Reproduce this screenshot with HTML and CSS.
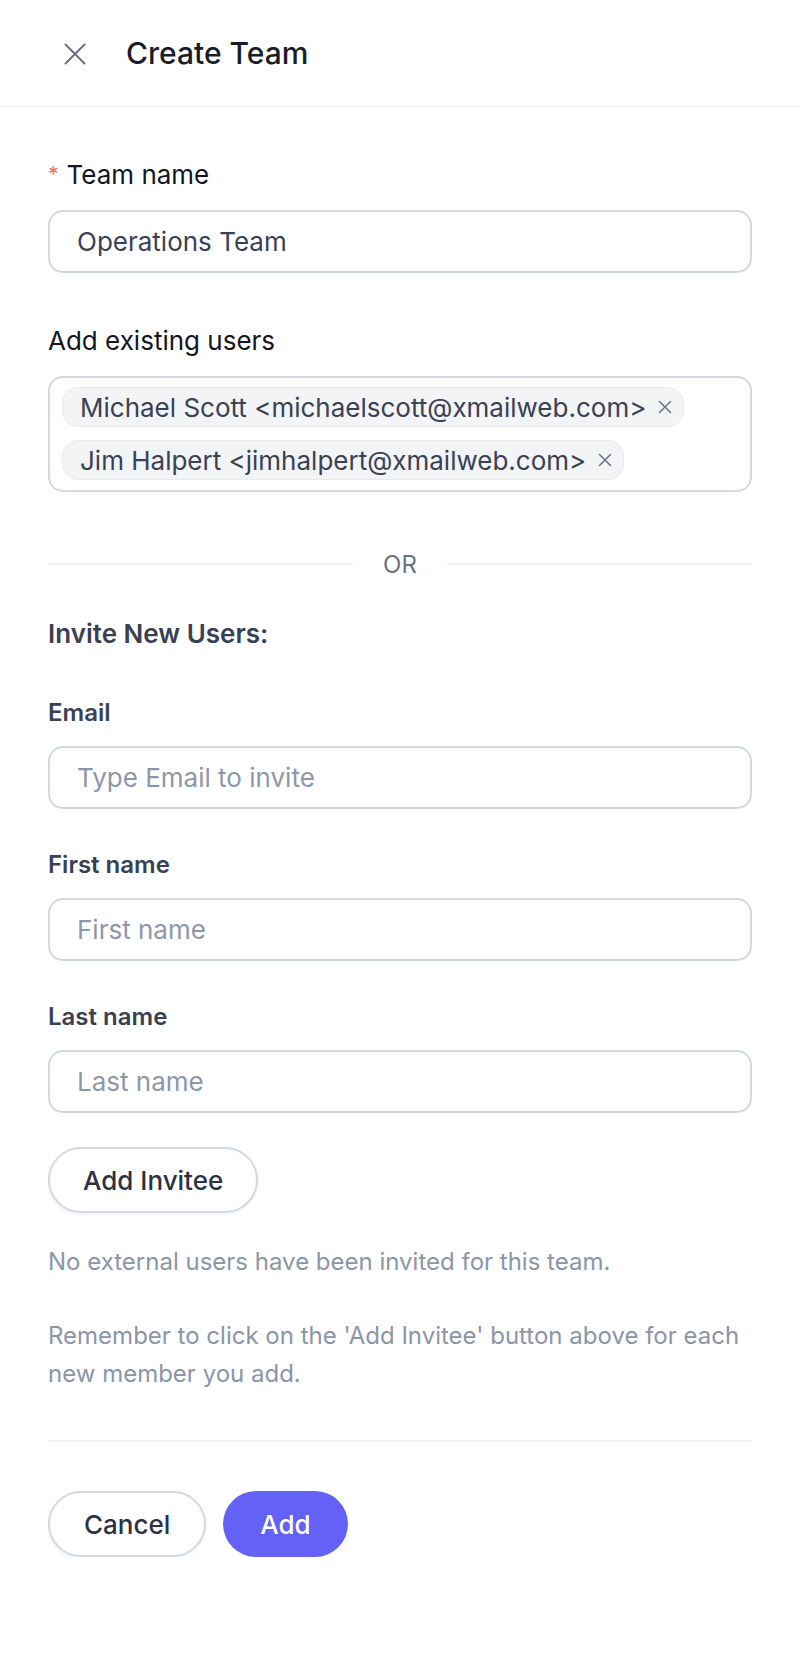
FILE: index.html
```html
<!DOCTYPE html>
<html lang="en">
<head>
<meta charset="utf-8">
<title>Create Team</title>
<link rel="stylesheet" href="styles.css">
</head>
<body>
<div class="panel">
  <header class="header">
    <button class="close" aria-label="Close">
      <svg width="22" height="22" viewBox="0 0 22 22"><path d="M1.5 1.5 L20.5 20.5 M20.5 1.5 L1.5 20.5" stroke="#6b7280" stroke-width="2" stroke-linecap="round" fill="none"/></svg>
    </button>
    <h1 class="title">Create Team</h1>
  </header>

  <form class="form">
    <div class="group">
      <label class="label first-label"><span class="req">*</span>Team name</label>
      <div class="input filled">Operations Team</div>
    </div>

    <div class="group gap-lg">
      <label class="label">Add existing users</label>
      <div class="chips">
        <span class="chip">Michael Scott &lt;michaelscott@xmailweb.com&gt;<svg class="chip-x" width="14" height="14" viewBox="0 0 14 14"><path d="M1.5 1.5 L12.5 12.5 M12.5 1.5 L1.5 12.5" stroke="#6b7280" stroke-width="1.5" stroke-linecap="round" fill="none"/></svg></span>
        <span class="chip">Jim Halpert &lt;jimhalpert@xmailweb.com&gt;<svg class="chip-x" width="14" height="14" viewBox="0 0 14 14"><path d="M1.5 1.5 L12.5 12.5 M12.5 1.5 L1.5 12.5" stroke="#6b7280" stroke-width="1.5" stroke-linecap="round" fill="none"/></svg></span>
      </div>
    </div>

    <div class="or">
      <span class="line"></span>
      <span class="or-text">OR</span>
      <span class="line"></span>
    </div>

    <h2 class="invite">Invite New Users:</h2>

    <div class="group sm first">
      <label class="label-sm">Email</label>
      <div class="input placeholder">Type Email to invite</div>
    </div>
    <div class="group sm">
      <label class="label-sm">First name</label>
      <div class="input placeholder">First name</div>
    </div>
    <div class="group sm">
      <label class="label-sm">Last name</label>
      <div class="input placeholder">Last name</div>
    </div>

    <button type="button" class="btn invitee">Add Invitee</button>

    <p class="help">No external users have been invited for this team.</p>
    <p class="help remember">Remember to click on the 'Add Invitee' button above for each new member you add.</p>

    <div class="divider"></div>

    <div class="actions">
      <button type="button" class="btn cancel">Cancel</button>
      <button type="button" class="btn primary">Add</button>
    </div>
  </form>
</div>
</body>
</html>
```

FILE: styles.css
```css
* { box-sizing: border-box; }
html, body {
  margin: 0;
  padding: 0;
  background: #ffffff;
  font-family: Inter, "Noto Sans", "Liberation Sans", sans-serif;
}
.panel { width: 800px; }

.header {
  height: 107px;
  border-bottom: 1px solid #ebebef;
  display: flex;
  align-items: center;
  padding-left: 64px;
}
.close {
  border: 0;
  background: none;
  padding: 0;
  width: 22px;
  height: 22px;
  display: flex;
  margin-right: 40px;
  margin-top: 2px;
}
.title {
  margin: 0;
  font-size: 30px;
  font-weight: 500;
  color: #1b1c29;
}

.form {
  padding: 50px 48px 0 48px;
  display: flex;
  flex-direction: column;
}
.group { display: flex; flex-direction: column; }
.gap-lg { margin-top: 50px; }

.label {
  font-size: 26px;
  line-height: 36px;
  color: #14161f;
  font-weight: 400;
  margin-bottom: 17px;
}
.first-label { margin-bottom: 15px; }
.req {
  color: #f26b6b;
  font-size: 21px;
  margin-right: 8px;
  position: relative;
  top: -2px;
}
.input {
  height: 63px;
  border: 2px solid #d0d9e4;
  border-radius: 15px;
  padding: 0 27px;
  display: flex;
  align-items: center;
  font-size: 26px;
}
.filled { color: #3a4154; }
.placeholder { color: #8e97a8; }

.chips {
  border: 2px solid #d0d9e4;
  border-radius: 15px;
  padding: 9px 12px 10px 12px;
  display: flex;
  flex-direction: column;
  align-items: flex-start;
  gap: 13px;
}
.chip {
  height: 40px;
  background: #f3f4f6;
  border: 1px solid #e8eaee;
  border-radius: 16px;
  padding: 0 11px 0 17px;
  display: inline-flex;
  align-items: center;
  font-size: 26px;
  color: #3a4154;
}
.chip-x {
  margin-left: 12px;
  flex: none;
}

.or {
  display: flex;
  align-items: center;
  margin-top: 56px;
  height: 32px;
}
.line { flex: 1; height: 2px; background: #eff0f2; }
.or-text {
  font-size: 24px;
  color: #6b7280;
  padding: 0 30px;
}

.invite {
  margin: 36px 0 0 0;
  font-size: 26px;
  line-height: 36px;
  font-weight: 600;
  color: #394052;
}

.sm { margin-top: 40px; }
.sm.first { margin-top: 45px; }
.label-sm {
  font-size: 24px;
  line-height: 32px;
  font-weight: 600;
  color: #394052;
  margin-bottom: 17px;
}

.btn {
  font-family: Inter, "Noto Sans", "Liberation Sans", sans-serif;
  font-size: 26px;
  font-weight: 500;
  border-radius: 999px;
  height: 66px;
  cursor: pointer;
}
.invitee {
  align-self: flex-start;
  margin-top: 34px;
  background: #ffffff;
  border: 2px solid #d0d9e4;
  color: #2c3244;
  padding: 0 33px;
  box-shadow: 0 2px 3px rgba(15, 23, 42, 0.05);
}

.help {
  margin: 30px 0 0 0;
  font-size: 24px;
  line-height: 38px;
  color: #8c95a6;
}
.remember { margin-top: 36px; }

.divider {
  height: 2px;
  background: #eff0f2;
  margin-top: 47px;
}

.actions {
  display: flex;
  gap: 17px;
  margin-top: 49px;
}
.cancel {
  background: #ffffff;
  border: 2px solid #d0d9e4;
  color: #2c3244;
  padding: 0 34px;
  box-shadow: 0 2px 3px rgba(15, 23, 42, 0.05);
}
.primary {
  background: #6461f6;
  border: 0;
  color: #ffffff;
  padding: 0 37px;
}
```
